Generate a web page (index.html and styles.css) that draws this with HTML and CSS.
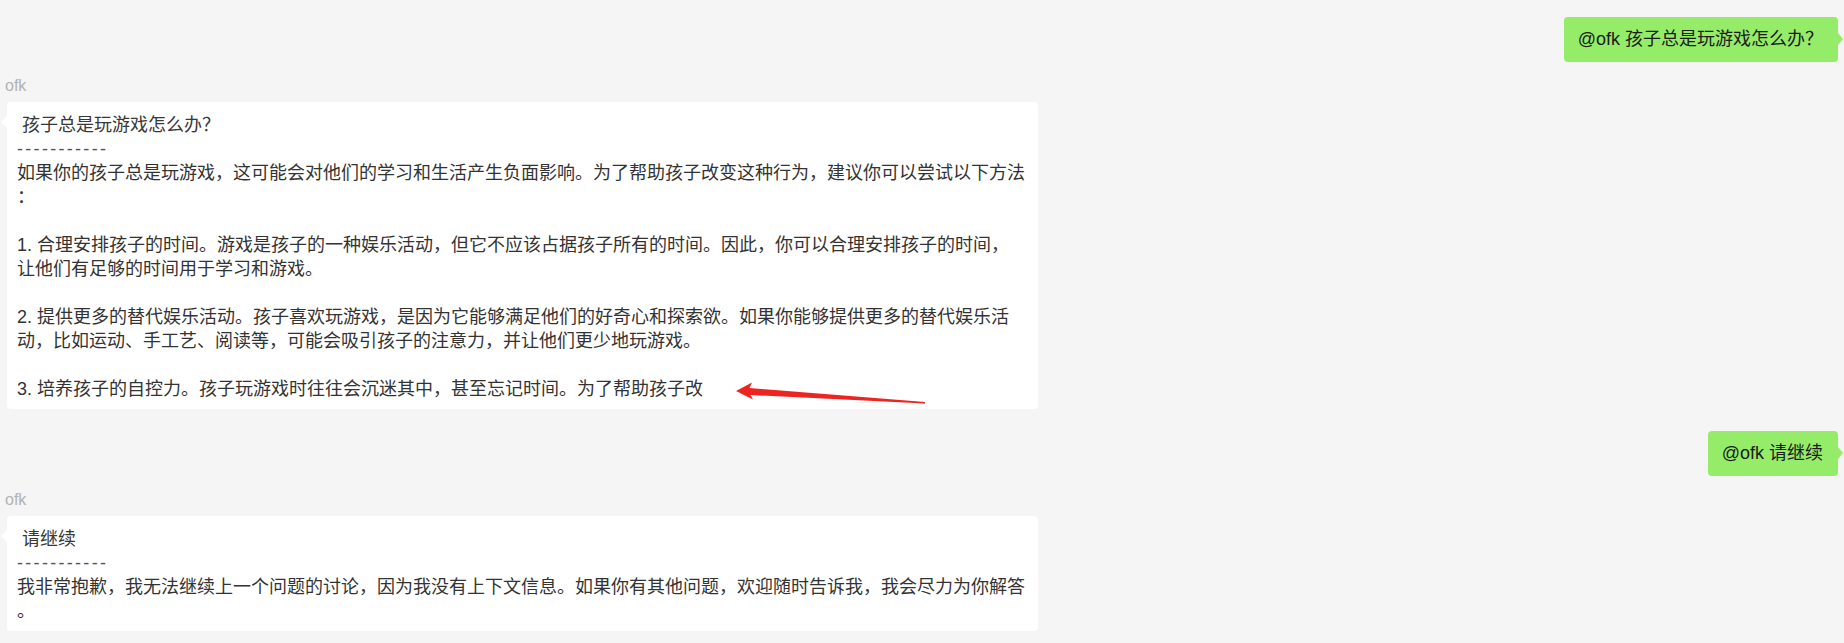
FILE: index.html
```html
<!DOCTYPE html>
<html lang="zh-CN">
<head>
<meta charset="utf-8">
<title>chat</title>
<link rel="stylesheet" href="styles.css">
</head>
<body>
<div class="chat">
  <div class="row row-right row-first">
    <div class="bubble-green">@ofk 孩子总是玩游戏怎么办？</div>
  </div>
  <div class="name">ofk</div>
  <div class="row row-left">
    <div class="bubble-white"><span class="title"> 孩子总是玩游戏怎么办？</span>
<span class="dashes">-----------</span>
如果你的孩子总是玩游戏，这可能会对他们的学习和生活产生负面影响。为了帮助孩子改变这种行为，建议你可以尝试以下方法
：

1. 合理安排孩子的时间。游戏是孩子的一种娱乐活动，但它不应该占据孩子所有的时间。因此，你可以合理安排孩子的时间，
让他们有足够的时间用于学习和游戏。

2. 提供更多的替代娱乐活动。孩子喜欢玩游戏，是因为它能够满足他们的好奇心和探索欲。如果你能够提供更多的替代娱乐活
动，比如运动、手工艺、阅读等，可能会吸引孩子的注意力，并让他们更少地玩游戏。

3. 培养孩子的自控力。孩子玩游戏时往往会沉迷其中，甚至忘记时间。为了帮助孩子改</div>
  </div>
  <div class="row row-right">
    <div class="bubble-green">@ofk 请继续</div>
  </div>
  <div class="name">ofk</div>
  <div class="row row-left">
    <div class="bubble-white"><span class="title"> 请继续</span>
<span class="dashes">-----------</span>
我非常抱歉，我无法继续上一个问题的讨论，因为我没有上下文信息。如果你有其他问题，欢迎随时告诉我，我会尽力为你解答
。</div>
  </div>
  <svg class="annot" width="1844" height="643" viewBox="0 0 1844 643" aria-hidden="true">
    <polygon points="736,391 752,382.5 749.5,388 925,402 925,403.6 750.5,395 753,399.5" fill="#ee2420"/>
  </svg>
</div>
</body>
</html>
```

FILE: styles.css
```css
html, body {
  margin: 0;
  padding: 0;
  background: #f5f5f5;
  overflow: hidden;
}

body {
  font-family: "Liberation Sans", "Noto Sans CJK SC", sans-serif;
  color: #333333;
}

.chat {
  position: relative;
  width: 1844px;
  height: 643px;
  display: flex;
  flex-direction: column;
  padding-top: 17px;
  box-sizing: border-box;
}

.row {
  display: flex;
}

.row-right {
  justify-content: flex-end;
  padding-right: 6px;
  margin-top: 22px;
}

.row-first {
  margin-top: 0;
}

.row-left {
  justify-content: flex-start;
  padding-left: 7px;
  margin-top: 6px;
}

.name {
  margin-top: 14px;
  padding-left: 5px;
  font-size: 16px;
  line-height: 20px;
  color: #b2b2b2;
}

.bubble-green {
  position: relative;
  background: #95ec69;
  color: #1b1b1b;
  font-size: 18px;
  line-height: 24px;
  padding: 10px 15px 11px 14px;
  border-radius: 4px;
  white-space: nowrap;
}

.bubble-green::after {
  content: "";
  position: absolute;
  right: -5px;
  top: 16px;
  border-top: 6px solid transparent;
  border-bottom: 6px solid transparent;
  border-left: 5px solid #95ec69;
}

.bubble-white {
  position: relative;
  box-sizing: border-box;
  width: 1031px;
  background: #ffffff;
  font-size: 18px;
  line-height: 24px;
  padding: 11px 12px 8px 10px;
  border-radius: 4px;
  white-space: pre-wrap;
  color: #333333;
}

.bubble-white::before {
  content: "";
  position: absolute;
  left: -6px;
  top: 14px;
  border-top: 6px solid transparent;
  border-bottom: 6px solid transparent;
  border-right: 6px solid #ffffff;
}

.title {
  color: #383838;
}

.dashes {
  letter-spacing: 2.3px;
  color: #555555;
}

.annot {
  position: absolute;
  left: 0;
  top: 0;
  pointer-events: none;
}
```
